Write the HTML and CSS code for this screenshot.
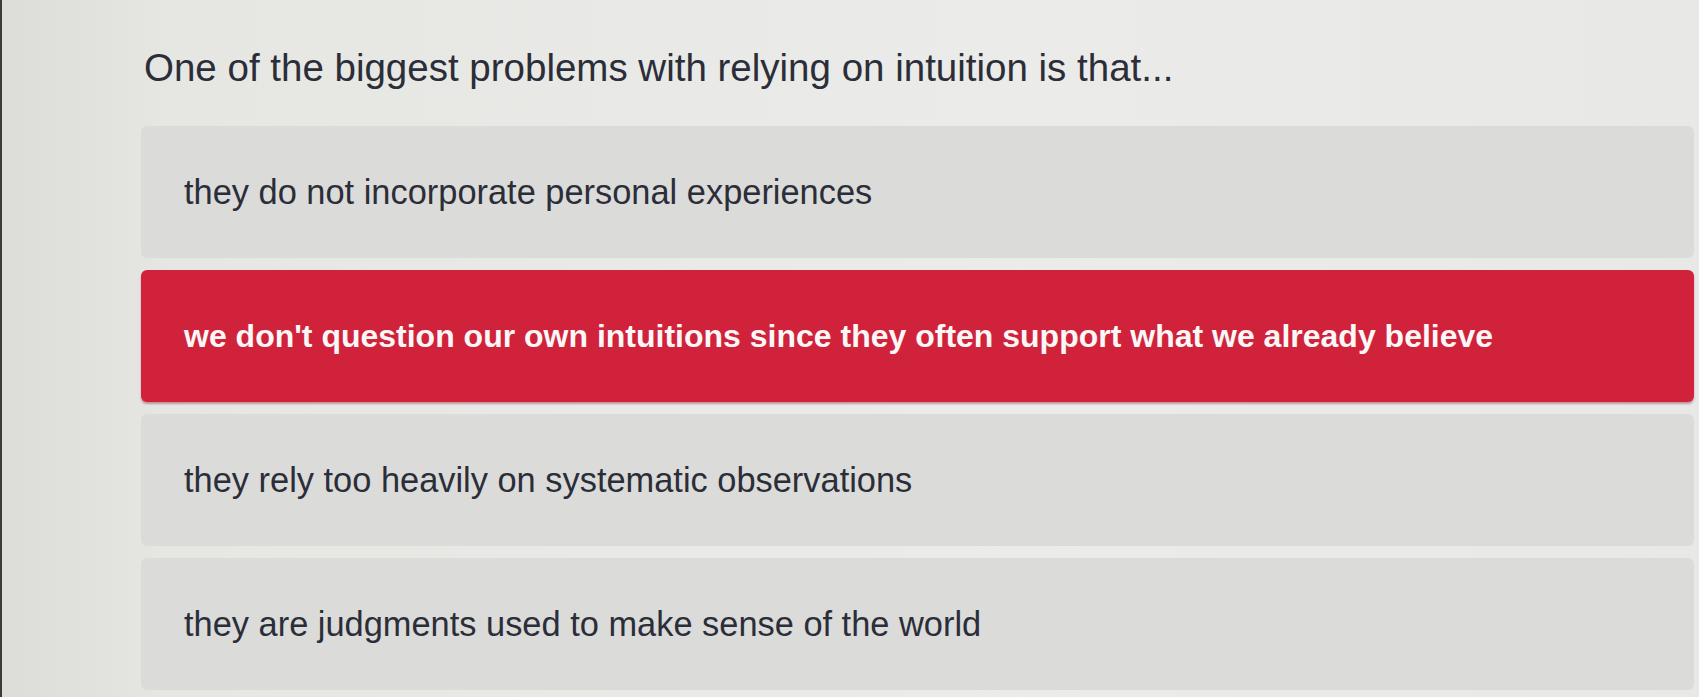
FILE: index.html
```html
<!DOCTYPE html>
<html lang="en">
<head>
  <meta charset="UTF-8">
  <meta name="viewport" content="width=device-width, initial-scale=1.0">
  <title>Question</title>
  <link rel="stylesheet" href="styles.css">
</head>
<body>
  <main class="quiz">
    <h1 class="question">One of the biggest problems with relying on intuition is that...</h1>

    <div class="answers">
      <div class="answer">they do not incorporate personal experiences</div>
      <div class="answer selected">we don't question our own intuitions since they often support what we already believe</div>
      <div class="answer">they rely too heavily on systematic observations</div>
      <div class="answer">they are judgments used to make sense of the world</div>
    </div>
  </main>
</body>
</html>
```

FILE: styles.css
```css
body {
  margin: 0;
  padding: 0;
  font-family: "Liberation Sans", Arial, sans-serif;
  color: #2b2e38;
  background: linear-gradient(90deg, #dcdcd9 0%, #e6e6e3 10%, #ebebe9 60%, #e8e8e6 100%);
  border-left: 2px solid #3a3a3a;
  height: 697px;
  overflow: hidden;
}

.quiz {
  padding: 46px 5px 0 139px;
}

.question {
  font-size: 38.5px;
  font-weight: 400;
  line-height: 44px;
  margin: 0 0 36px 3px;
}

.answers {
  display: flex;
  flex-direction: column;
  gap: 12px;
}

.answer {
  display: flex;
  align-items: center;
  height: 132px;
  padding: 0 43px;
  font-size: 34.4px;
  background: #dbdbda;
  border-radius: 6px;
}

.answer.selected {
  background: #d0233b;
  color: #fbf7f7;
  font-size: 32px;
  font-weight: 700;
  box-shadow: 0 2px 2px rgba(120, 0, 20, 0.35);
}
```
